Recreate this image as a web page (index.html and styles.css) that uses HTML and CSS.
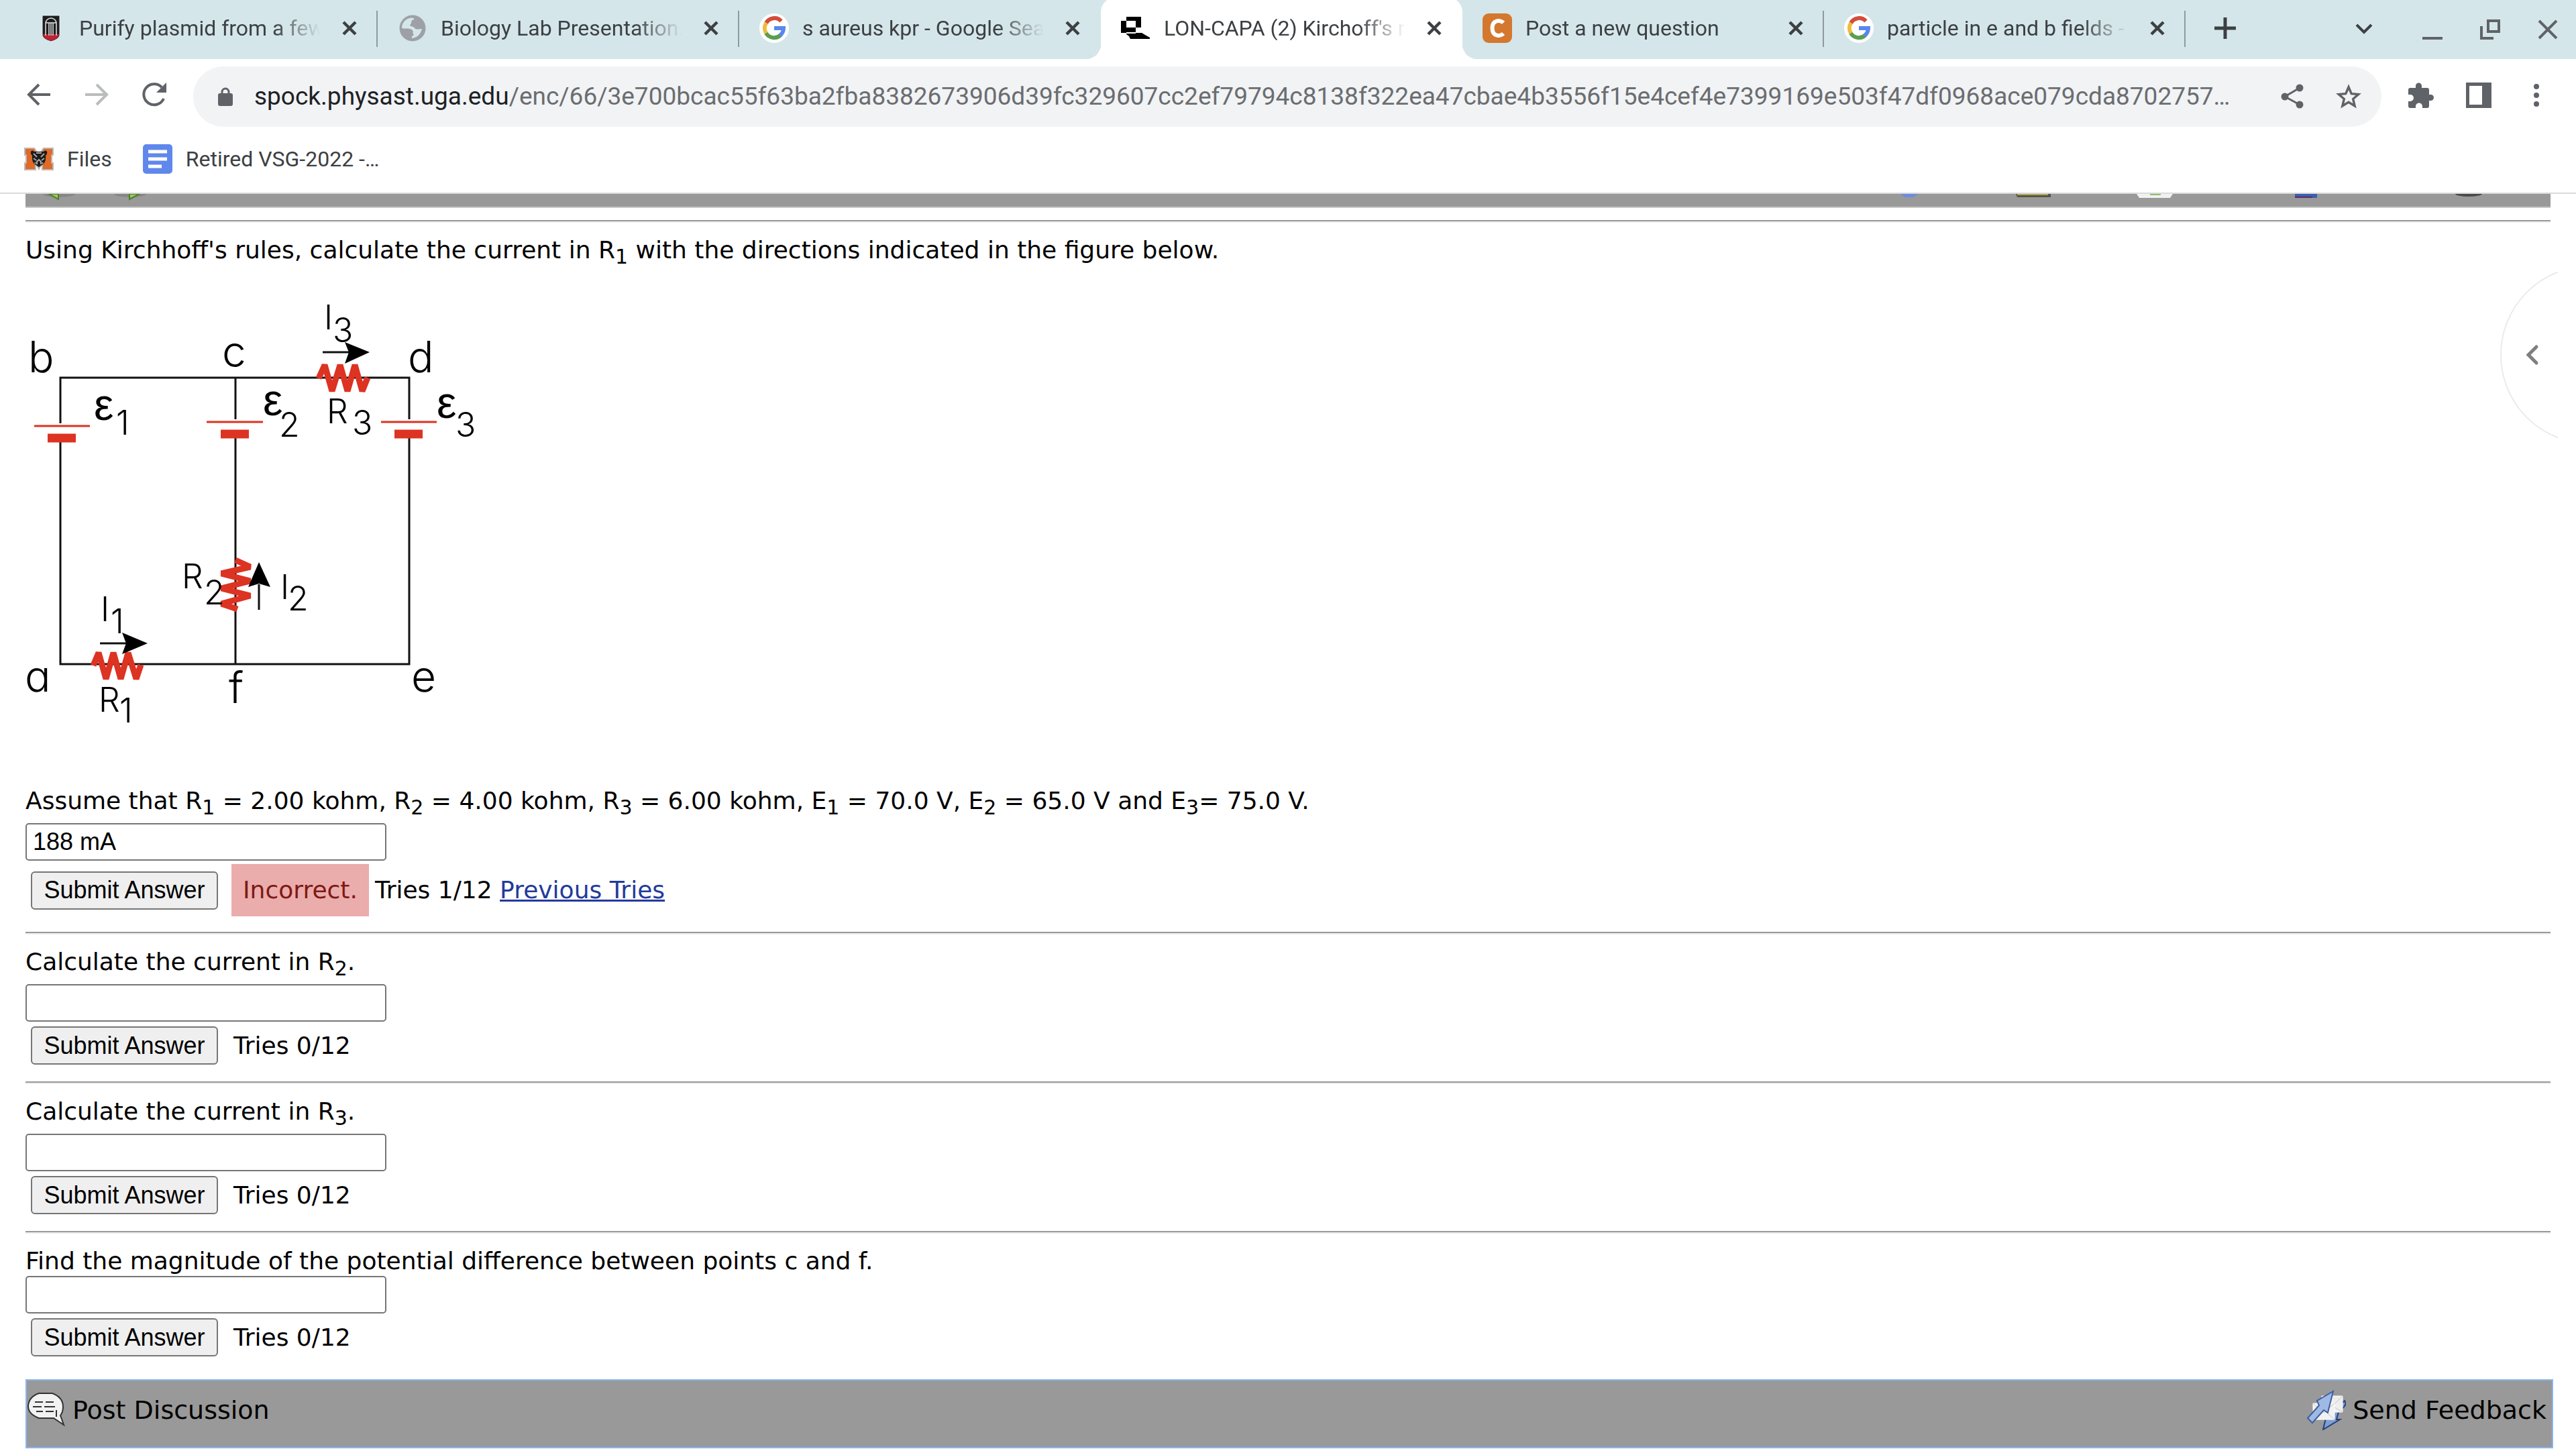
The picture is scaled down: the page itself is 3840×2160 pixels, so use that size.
FILE: index.html
```html
<!DOCTYPE html>
<html lang="en">
<head>
    <meta charset="UTF-8">
    <meta name="viewport" content="width=device-width, initial-scale=1.0">
    <title>LON-CAPA (2) Kirchoff's rules</title>
    <link rel="stylesheet" href="styles.css">
</head>
<body>
    <!-- shared icons -->
    <svg class="defs" aria-hidden="true">
        <symbol id="close" viewBox="0 0 22 22"><path d="M2 2L20 20M20 2L2 20" stroke="#3c4043" stroke-width="4.5"/></symbol>
        <symbol id="google" viewBox="0 0 44 44">
            <circle cx="22" cy="22" r="22" fill="#fff"/>
            <g fill="none" stroke-width="6">
                <path d="M32.500 11.500A14 14 0 0 0 10 14.500" stroke="#d14d3c"/>
                <path d="M10.400 14A14 14 0 0 0 10.400 30" stroke="#f0bb3d"/>
                <path d="M10 29.500A14 14 0 0 0 31.500 32.500" stroke="#5a9f4f"/>
                <path d="M22 22H36A14 14 0 0 1 30.500 33" stroke="#5a87ee"/>
            </g>
        </symbol>
    </svg>

    <header class="browser">
        <div class="tab-strip">
            <div class="tab">
                <svg class="favicon" viewBox="0 0 44 44">
                    <path d="M9 3H35V33Q33 39 22 42Q11 39 9 33Z" fill="#1d1d1f" stroke="#e8eef0"/>
                    <path d="M10 31H34Q34 38 22 41Q10 38 10 31Z" fill="#ba2335"/>
                    <path d="M14 33V15A8 8 0 0 1 30 15V33M19 33V14M25 33V14M14 14H30M22 14V33" fill="none" stroke="#dfe3e4" stroke-width="1.500"/>
                </svg>
                <span class="title">Purify plasmid from a few colonies</span>
                <button class="tab-close" aria-label="Close tab"><svg><use href="#close"/></svg></button>
            </div>
            <div class="tab">
                <svg class="favicon" viewBox="0 0 44 44">
                    <circle cx="22" cy="22" r="19.500" fill="#9da1a7"/>
                    <path d="M6 22C6 13 13 7 21 6.500C24 7 25 8 24 9C21 10 20 11 20 14C20 16 18 16 18 18C20 20 24 19 25 22C27 24 29 24 36 23C34 31 29 36 21 37C20 35 21 34 23 33C24 31 24 30 22 30C24 27 22 24 18 23C14 22 11 23 6 22Z" fill="#d5e6ea"/>
                </svg>
                <span class="title">Biology Lab Presentation.pptx</span>
                <button class="tab-close" aria-label="Close tab"><svg><use href="#close"/></svg></button>
            </div>
            <div class="tab no-line">
                <svg class="favicon"><use href="#google"/></svg>
                <span class="title">s aureus kpr - Google Search</span>
                <button class="tab-close" aria-label="Close tab"><svg><use href="#close"/></svg></button>
            </div>
            <div class="tab active">
                <svg class="favicon" viewBox="0 0 44 44">
                    <path d="M8 5H30V21H22V29H31L36 32L43 36V38H14L12 34L8 31V29H0V11H8ZM8 11V21H22V11ZM8 28H22V30H8Z" fill="#000" fill-rule="evenodd"/>
                </svg>
                <span class="title">LON-CAPA (2) Kirchoff's rules</span>
                <button class="tab-close" aria-label="Close tab"><svg><use href="#close"/></svg></button>
            </div>
            <div class="tab">
                <svg class="favicon" viewBox="0 0 44 44">
                    <rect width="44" height="44" rx="9" fill="#d4782f"/>
                    <path d="M31 14C27 9.500 14.500 9 14.500 22C14.500 35 27 34.500 31 30" fill="none" stroke="#fff" stroke-width="6"/>
                </svg>
                <span class="title">Post a new question</span>
                <button class="tab-close" aria-label="Close tab"><svg><use href="#close"/></svg></button>
            </div>
            <div class="tab">
                <svg class="favicon"><use href="#google"/></svg>
                <span class="title">particle in e and b fields - Google</span>
                <button class="tab-close" aria-label="Close tab"><svg><use href="#close"/></svg></button>
            </div>
            <button class="new-tab" aria-label="New tab">
                <svg width="34" height="34" viewBox="0 0 34 34"><path d="M17 1V33M1 17H33" stroke="#3c4043" stroke-width="5"/></svg>
            </button>
            <div class="window-buttons">
                <button aria-label="Search tabs"><svg viewBox="0 0 34 34"><path d="M6 10L17 21L28 10" fill="none" stroke="#3c4043" stroke-width="4"/></svg></button>
                <button aria-label="Minimize"><svg viewBox="0 0 34 34"><path d="M2 30H32" stroke="#5f6368" stroke-width="4"/></svg></button>
                <button aria-label="Restore"><svg viewBox="0 0 34 34"><path d="M14 4H30V20H14ZM4 12V30H22" fill="none" stroke="#5f6368" stroke-width="4"/></svg></button>
                <button aria-label="Close window"><svg viewBox="0 0 34 34"><path d="M4 4L30 30M30 4L4 30" stroke="#5f6368" stroke-width="4"/></svg></button>
            </div>
        </div>

        <div class="toolbar">
            <div class="nav-buttons">
                <button aria-label="Back"><svg viewBox="0 0 38 38"><path d="M36 19H4M19 4L4 19L19 34" fill="none" stroke="#5f6368" stroke-width="4"/></svg></button>
                <button aria-label="Forward" disabled><svg viewBox="0 0 38 38"><path d="M2 19H34M19 4L34 19L19 34" fill="none" stroke="#babcbe" stroke-width="4"/></svg></button>
                <button aria-label="Reload"><svg viewBox="0 0 38 38"><path d="M33 25A15.500 15.500 0 1 1 30 8" fill="none" stroke="#5f6368" stroke-width="4"/><path d="M37 1V16H22Z" fill="#5f6368"/></svg></button>
            </div>
            <div class="omnibox">
                <svg class="lock" width="22" height="28" viewBox="0 0 22 28"><path d="M6 11V7A5 5 0 0 1 16 7V11" fill="none" stroke="#5f6368" stroke-width="3"/><rect y="9" width="22" height="19" rx="3" fill="#5f6368"/></svg>
                <div class="url" role="textbox" aria-label="Address">spock.physast.uga.edu<span class="path">/enc/66/3e700bcac55f63ba2fba8382673906d39fc329607cc2ef79794c8138f322ea47cbae4b3556f15e4cef4e7399169e503f47df0968ace079cda8702757…</span></div>
                <button aria-label="Share"><svg viewBox="0 0 38 38"><path d="M30 6L8 19L30 31" fill="none" stroke="#5f6368" stroke-width="3"/><g fill="#5f6368"><circle cx="30" cy="6" r="5.500"/><circle cx="8" cy="19" r="5.500"/><circle cx="30" cy="31" r="5.500"/></g></svg></button>
                <button aria-label="Bookmark this tab"><svg viewBox="0 0 40 40"><path d="M20 5L24.400 15.400L35.500 16.400L27 23.700L29.600 34.600L20 28.800L10.400 34.600L13 23.700L4.500 16.400L15.600 15.400Z" fill="none" stroke="#5f6368" stroke-width="3.600"/></svg></button>
            </div>
            <div class="tool-buttons">
                <button aria-label="Extensions"><svg viewBox="0 0 38 38"><path d="M3 8H11V5A4.500 4.500 0 0 1 20 5V8H28Q31 8 31 11V18H33.500A4.300 4.300 0 0 1 33.500 27H31V35Q31 38 28 38H21V35.500A5 5 0 0 0 11 35.500V38H3Q0 38 0 35V28H3A5 5 0 0 0 3 18H0V11Q0 8 3 8Z" fill="#5f6368"/></svg></button>
                <button aria-label="Side panel"><svg viewBox="0 0 38 38"><path d="M0 0H38V38H0ZM5 5V33H24V5Z" fill="#5f6368" fill-rule="evenodd"/></svg></button>
                <button aria-label="Menu"><svg viewBox="0 0 38 38"><g fill="#5f6368"><circle cx="19" cy="6" r="4"/><circle cx="19" cy="19" r="4"/><circle cx="19" cy="32" r="4"/></g></svg></button>
            </div>
        </div>

        <nav class="bookmarks">
            <a href="#">
                <svg width="44" height="44" viewBox="0 0 44 44">
                    <path d="M1 6H15L22 16L29 6H43V16H41V28H43V38H27V28L22 37L17 28V38H1V28H3V16H1Z" fill="#e06a26" stroke="#b9b9b9" stroke-width="2"/>
                    <path d="M10 11Q12 8 15 11H29Q32 8 34 11Q35 14 32 17Q33 26 28 30L22 34L16 30Q11 26 12 17Q9 14 10 11Z" fill="#1b1b1b"/>
                    <path d="M14 14L19 19M30 14L25 19M14 21L18 24M30 21L26 24M19 30V26L22 23L25 26V30M18 13H26M16 27L17 29M28 27L27 29" fill="none" stroke="#a8a8a8" stroke-width="2"/>
                </svg>
                Files
            </a>
            <a href="#">
                <svg width="44" height="44" viewBox="0 0 44 44"><rect width="44" height="44" rx="5" fill="#6088ec"/><path d="M8 11H36M8 22H36M8 33H28" stroke="#fff" stroke-width="5"/></svg>
                Retired VSG-2022 -…
            </a>
        </nav>
    </header>

    <main class="page">
        <!-- bottom edge of the scrolled course menu -->
        <div class="course-menu">
            <svg width="180" height="19" viewBox="0 0 180 19">
                <ellipse cx="50" cy="0" rx="24" ry="5" fill="#868686"/>
                <ellipse cx="156" cy="0" rx="24" ry="5" fill="#868686"/>
                <path d="M35 0H49V8Z" fill="#9cc96b" stroke="#4f7f22" stroke-width="2"/>
                <path d="M155 0H170L155 8Z" fill="#9cc96b" stroke="#4f7f22" stroke-width="2"/>
            </svg>
            <svg width="888" height="19" viewBox="0 0 888 19">
                <path d="M14 0H40L33 5H21Z" fill="#6d8ce0"/>
                <path d="M186 0H238V5H188Z" fill="#56544a"/><path d="M188 0H234V2H188Z" fill="#b5a955"/>
                <path d="M366 0H420L416 6H370Z" fill="#f0f2f0"/><path d="M386 0H402V2H386Z" fill="#8fbf6a"/>
                <path d="M602 0H635V6H602Z" fill="#3d5fb0"/><path d="M602 4H628V6H602Z" fill="#5e2c62"/>
                <ellipse cx="861" cy="0" rx="20" ry="4" fill="#4a4a4a"/>
            </svg>
        </div>

        <hr>
        <section class="part">
            <p>Using Kirchhoff's rules, calculate the current in R<sub>1</sub> with the directions indicated in the figure below.</p>
            <svg class="circuit" width="680" height="700" viewBox="38 0 680 700" role="img" aria-label="Circuit with three batteries and three resistors">
                <g class="wire">
                    <path d="M351 132H90V200M90 228V559H610V222M610 194V132H351V194M351 222V559"/>
                    <path d="M481 94H522M149 528H190M386 478V440"/>
                </g>
                <g class="resistor">
                    <path d="M475 133L484 113L495 152L507 113L518 152L529 113L540 152L548 132"/>
                    <path d="M139 561L147 542L158 581L169 542L180 581L191 542L203 581L210 560"/>
                    <path d="M351 404L373 414L330 424L373 435L330 446L373 457L330 469L354 477"/>
                </g>
                <g class="arrow">
                    <path d="M514 79L551 94L514 111L520 94Z"/>
                    <path d="M182 512L220 528L182 544L188 528Z"/>
                    <path d="M386 407L403 444L386 439L370 444Z"/>
                </g>
                <g class="plate-thin"><path d="M51 204H134M308 198H392M568 198H651"/></g>
                <g class="plate-thick"><path d="M71 222H113M329 216H371M588 216H630"/></g>
                <g class="node">
                    <text x="42" y="124">b</text>
                    <text x="331" y="116">c</text>
                    <text x="608" y="124">d</text>
                    <text x="37" y="600">a</text>
                    <text x="341" y="617">f</text>
                    <text x="613" y="600">e</text>
                </g>
                <g class="label">
                    <text x="483" y="60">I</text><text x="496" y="79">3</text>
                    <text x="487" y="200">R</text><text x="525" y="217">3</text>
                    <text x="271" y="446">R</text><text x="304" y="470">2</text>
                    <text x="418" y="462">I</text><text x="429" y="479">2</text>
                    <text x="150" y="495">I</text><text x="165" y="513">1</text>
                    <text x="147" y="630">R</text><text x="178" y="646">1</text>
                    <text x="173" y="217">1</text><text x="416" y="220">2</text><text x="679" y="220">3</text>
                </g>
                <g class="emf">
                    <text x="140" y="195">ε</text>
                    <text x="392" y="188">ε</text>
                    <text x="651" y="192">ε</text>
                </g>
            </svg>
            <p><label for="r1">Assume that R<sub>1</sub> = 2.00 kohm, R<sub>2</sub> = 4.00 kohm, R<sub>3</sub> = 6.00 kohm, E<sub>1</sub> = 70.0 V, E<sub>2</sub> = 65.0 V and E<sub>3</sub>= 75.0 V.</label></p>
            <input class="answer" type="text" id="r1" value="188 mA">
            <div class="submit-row graded">
                <button class="submit">Submit Answer</button>
                <span class="incorrect">Incorrect.</span>
                <span>Tries 1/12 <a href="#">Previous Tries</a></span>
            </div>
        </section>

        <hr>
        <section class="part">
            <p><label for="r2">Calculate the current in R<sub>2</sub>.</label></p>
            <input class="answer" type="text" id="r2">
            <div class="submit-row">
                <button class="submit">Submit Answer</button>
                <span class="tries">Tries 0/12</span>
            </div>
        </section>

        <hr>
        <section class="part">
            <p><label for="r3">Calculate the current in R<sub>3</sub>.</label></p>
            <input class="answer" type="text" id="r3">
            <div class="submit-row">
                <button class="submit">Submit Answer</button>
                <span class="tries">Tries 0/12</span>
            </div>
        </section>

        <hr>
        <section class="part last">
            <p><label for="vcf">Find the magnitude of the potential difference between points c and f.</label></p>
            <input class="answer" type="text" id="vcf">
            <div class="submit-row">
                <button class="submit">Submit Answer</button>
                <span class="tries">Tries 0/12</span>
            </div>
        </section>

        <footer class="discussion">
            <a href="#">
                <svg width="58" height="60" viewBox="0 0 58 60">
                    <path d="M18 5H38Q54 11 54 25Q54 33 50 38L55 52L40 42H18Q2 36 2 24Q3 10 18 5Z" fill="#f2f2f2" stroke="#333" stroke-width="2"/>
                    <path d="M12 18H24M28 18H40M9 25H22M26 25H42M14 32H24M28 32H40M44 30V40" stroke="#333" stroke-width="2"/>
                </svg>
                Post Discussion
            </a>
            <a href="#">
                <svg width="58" height="60" viewBox="0 0 58 60">
                    <path d="M56 16Q60 22 53 27L47 33L44 44H49L24 59L28 42Z" fill="#7d9fd4" stroke="#27407c" stroke-width="2"/>
                    <path d="M22 9H53V33H22Z" fill="#eee" stroke="#fff"/><path d="M53 9L38 24L53 33" fill="none" stroke="#c4c4c4"/>
                    <path d="M9 20H41V44H9Z" fill="#f1f1f1" stroke="#fff"/><path d="M9 44L25 30L41 44M9 20L25 34L41 20" fill="none" stroke="#c4c4c4"/>
                    <path d="M39 2L15 16L18 23L1 42L8 49L25 30L31 34Z" fill="#9db9e4" stroke="#3f5f9f" stroke-width="2"/>
                </svg>
                Send Feedback
            </a>
        </footer>
    </main>

    <div class="side-handle">
        <button aria-label="Open side panel"><svg width="20" height="32" viewBox="0 0 20 32"><path d="M16 4L4 16L16 28" fill="none" stroke="#7f7f7f" stroke-width="5" stroke-linecap="round"/></svg></button>
    </div>
</body>
</html>
```

FILE: styles.css
```css
:root {
    --strip: #d5e6ea;
    --icon: #5f6368;
    --tab-text: #3c4043;
    --bar: #999999;
}

* {
    box-sizing: border-box;
}

body {
    margin: 0;
    background: #ffffff;
    color: #000000;
    font-family: Verdana, "DejaVu Sans", sans-serif;
    font-size: 36px;
    line-height: 44px;
}

svg {
    display: block;
    flex: none;
}

.defs {
    position: absolute;
    width: 0;
    height: 0;
}

/* browser chrome */
.browser {
    border-bottom: 2px solid #dadada;
    font-family: Roboto, sans-serif;
    font-size: 32px;
    color: var(--tab-text);
}

.browser button {
    display: flex;
    padding: 0;
    border: none;
    background: none;
}

.tab-strip {
    display: flex;
    height: 88px;
    padding-left: 24px;
    background: var(--strip);
    overflow: hidden;
}

.tab {
    position: relative;
    display: flex;
    align-items: center;
    flex: 0 1 539px;
    min-width: 0;
    padding: 0 56px 4px 30px;
}

.tab::after {
    content: "";
    position: absolute;
    right: 0;
    top: 16px;
    width: 2px;
    height: 54px;
    background: #8f9a9e;
}

.favicon {
    width: 44px;
    height: 44px;
}

.tab .title {
    flex: 1;
    margin-left: 20px;
    overflow: hidden;
    white-space: nowrap;
    -webkit-mask-image: linear-gradient(to left, transparent, #000 70px);
    mask-image: linear-gradient(to left, transparent, #000 70px);
}

.browser .tab-close {
    margin-left: 32px;
    margin-right: -25px;
}

.tab-close svg {
    width: 22px;
    height: 22px;
}

.tab.no-line::after {
    display: none;
}

.tab.active {
    margin-top: -4px;
    padding-top: 4px;
    background: #ffffff;
    border-radius: 22px 22px 0 0;
}

.tab.active::before,
.tab.active::after {
    content: "";
    position: absolute;
    top: auto;
    bottom: 0;
    width: 22px;
    height: 22px;
}

.tab.active::before {
    left: -22px;
    background: radial-gradient(circle at 0 0, transparent 22px, #ffffff 22px);
}

.tab.active::after {
    right: -22px;
    background: radial-gradient(circle at 100% 0, transparent 22px, #ffffff 22px);
}

.tab-strip .new-tab {
    align-items: center;
    margin-left: 42px;
    padding-bottom: 4px;
}

.window-buttons {
    display: flex;
    align-items: center;
    gap: 52px;
    margin-left: auto;
    padding-right: 25px;
}

.window-buttons button:first-child {
    margin-right: 16px;
}

.window-buttons svg {
    width: 34px;
    height: 34px;
}

.toolbar {
    display: flex;
    align-items: center;
    padding: 11px 40px 0 39px;
}

.toolbar button svg {
    width: 38px;
    height: 38px;
}

.nav-buttons,
.tool-buttons {
    display: flex;
    gap: 48px;
    margin-bottom: 6px;
}

.tool-buttons {
    margin-bottom: 4px;
}

.omnibox {
    display: flex;
    align-items: center;
    flex: 1;
    min-width: 0;
    height: 90px;
    gap: 46px;
    margin: 0 40px 0 39px;
    padding: 0 30px 0 37px;
    border-radius: 45px;
    background: #f1f3f5;
}

.url {
    flex: 1;
    min-width: 0;
    margin-left: -14px;
    overflow: hidden;
    white-space: nowrap;
    font-size: 37px;
    color: #202124;
}

.path {
    color: #6b6d70;
}

.bookmarks {
    display: flex;
    gap: 46px;
    padding: 26px 36px 28px;
}

.bookmarks a {
    display: flex;
    align-items: center;
    gap: 20px;
    color: inherit;
    text-decoration: none;
}

/* problem page */
.page {
    padding: 0 38px;
}

.course-menu {
    display: flex;
    justify-content: space-between;
    padding-right: 95px;
    background: var(--bar);
    border-bottom: 2px solid #c8c8c8;
}

hr {
    height: 4px;
    margin: 0;
    border: none;
    border-top: 2px solid var(--bar);
    background: #eeeeee;
}

.course-menu + hr {
    margin-top: 18px;
}

.part {
    padding: 19px 0 25px;
}

.part p {
    margin: 0 0 11px;
}

.part.last p {
    margin: 0;
}

.part.last {
    padding-bottom: 34px;
}

sub {
    font-size: 30px;
    line-height: 0;
}

.circuit {
    margin: 36px 0 41px;
}

.wire {
    fill: none;
    stroke: #111111;
    stroke-width: 3;
}

.resistor {
    fill: none;
    stroke: #dd3322;
    stroke-width: 9;
    stroke-linejoin: bevel;
}

.plate-thin {
    stroke: #dd3322;
    stroke-width: 3;
}

.plate-thick {
    stroke: #dd3322;
    stroke-width: 13;
}

.circuit text {
    font-family: Inter, sans-serif;
    font-weight: 300;
    font-feature-settings: "cv11";
}

.node text {
    font-size: 64px;
}

.label text {
    font-size: 50px;
}

.circuit .emf text {
    font-family: "Liberation Sans", Arial, sans-serif;
    font-size: 66px;
}

.answer {
    display: block;
    width: 538px;
    height: 56px;
    padding: 0 9px;
    border: 2px solid #767676;
    border-radius: 5px;
    background: #ffffff;
    font-family: "Liberation Sans", Arial, sans-serif;
    font-size: 36px;
}

.submit-row {
    display: flex;
    align-items: center;
    margin-top: 7px;
    padding-left: 8px;
}

.submit-row.graded {
    margin: 5px 0 -2px;
}

.submit {
    width: 279px;
    height: 57px;
    padding: 0;
    border: 2px solid #767676;
    border-radius: 6px;
    background: #efefef;
    color: #000000;
    font-family: "Liberation Sans", Arial, sans-serif;
    font-size: 36px;
}

.incorrect {
    margin: 0 9px 0 20px;
    padding: 17px;
    background: #ebacac;
    color: #7d1a14;
}

.tries {
    margin-left: 23px;
}

.submit-row a {
    color: #233a9b;
}

.discussion {
    display: flex;
    justify-content: space-between;
    margin-right: -4px;
    padding: 14px 8px 25px 0;
    border: 2px solid #8ab4f0;
    background: var(--bar);
    font-size: 38px;
}

.discussion a {
    display: flex;
    align-items: center;
    gap: 10px;
    color: #000000;
    text-decoration: none;
}

/* half-hidden round handle at the window edge */
.side-handle {
    position: absolute;
    top: 396px;
    right: 27px;
    width: 86px;
    height: 266px;
    overflow: hidden;
}

.side-handle button {
    display: flex;
    align-items: center;
    width: 266px;
    height: 266px;
    padding: 0 0 0 36px;
    border: 2px solid #ebebeb;
    border-radius: 50%;
    background: #ffffff;
}
```
